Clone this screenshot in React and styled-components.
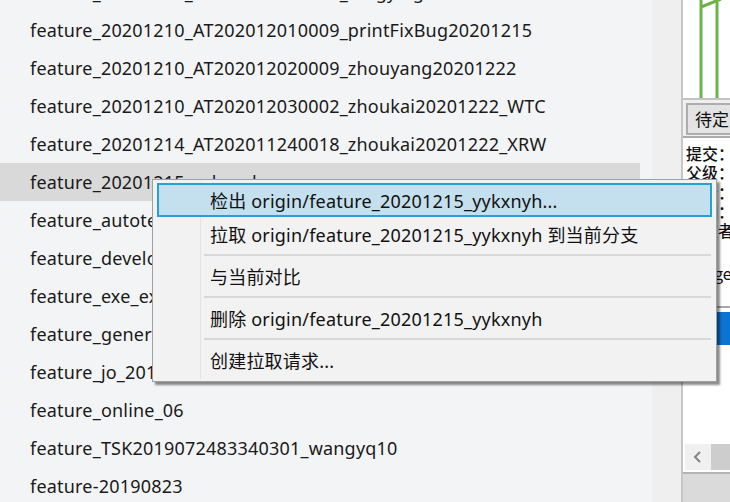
import React from 'react';
import styled, { createGlobalStyle } from 'styled-components';

const GlobalStyle = createGlobalStyle`
  html, body {
    margin: 0;
    padding: 0;
    width: 730px;
    height: 502px;
    overflow: hidden;
    font-family: "Noto Sans", "Noto Sans CJK SC", sans-serif;
  }
`;

const Window = styled.div`
  position: relative;
  display: flex;
  width: 730px;
  height: 502px;
  overflow: hidden;
  background: #f3f4f6;
`;

const BranchPane = styled.div`
  display: flex;
  width: 681px;
  flex-shrink: 0;
`;

const ListViewport = styled.div`
  width: 652px;
  height: 502px;
  overflow: hidden;
  background: #f3f4f6;
`;

const BranchList = styled.ul`
  list-style: none;
  margin: -27px 0 0;
  padding: 0;
  width: 640px;
`;

const BranchRow = styled.li`
  height: 38px;
  display: flex;
  align-items: center;
  padding-left: 30px;
  font-size: 18px;
  letter-spacing: 0.2px;
  color: #1a1a1a;
  white-space: nowrap;
  background: ${({ selected }) => (selected ? '#d9d9d9' : 'transparent')};
`;

const ScrollTrack = styled.div`
  flex: 1;
  background: #efefef;
`;

const DetailPane = styled.div`
  flex: 1;
  display: flex;
  flex-direction: column;
  border-left: 2px solid #c6c6c6;
  background: #ffffff;
  font-family: "Noto Sans CJK SC", sans-serif;
`;

const Graph = styled.div`
  height: 98px;
  background: #ffffff;
  border-bottom: 2px solid #c4c4c4;
`;

const ToolBar = styled.div`
  padding-top: 3px;
  padding-left: 3px;
  background: #f0f0f0;
  border-bottom: 2px solid #ababab;
  box-sizing: border-box;
  height: 38px;
`;

const ToolButton = styled.div`
  height: 32px;
  box-sizing: border-box;
  border: 2px solid #adadad;
  border-right: none;
  background: #e3e3e3;
  padding-left: 7px;
  font-size: 17px;
  line-height: 28px;
  white-space: nowrap;
  overflow: hidden;
  color: #111;
`;

const Details = styled.div`
  flex: 1;
  display: flex;
  flex-direction: column;
  padding-top: 6px;
  background: #fff;
`;

const InfoLine = styled.div`
  height: 19.3px;
  line-height: 19px;
  padding-left: 3px;
  font-size: 16px;
  font-weight: 500;
  color: #111;
  white-space: nowrap;
  overflow: hidden;
`;

const Message = styled(InfoLine)`
  margin-top: 24px;
  font-weight: 400;
`;

const Rule = styled.div`
  margin-top: 22px;
  height: 2px;
  background: #a9a9a9;
`;

const FileItem = styled.div`
  margin: 4px 0 0 3px;
  height: 33px;
  background: #0a74d2;
  border-radius: 3px 0 0 3px;
`;

const Spacer = styled.div`
  flex: 1;
`;

const HScroll = styled.div`
  display: flex;
  height: 26px;
  padding-left: 2px;
  margin-bottom: 2px;
`;

const ScrollButton = styled.div`
  width: 26px;
  background: #f0f0f0;
  display: flex;
  align-items: center;
  justify-content: center;
`;

const ScrollThumb = styled.div`
  flex: 1;
  background: #cdcdcd;
`;

const StatusArea = styled.div`
  height: 28px;
  border-top: 2px solid #b3b3b3;
  background: #dadada;
`;

const Menu = styled.div`
  position: absolute;
  left: 152px;
  top: 179px;
  width: 565px;
  box-sizing: border-box;
  padding: 3px 4px 4px 4px;
  background: #f2f2f2;
  border: 1px solid #a0a0a0;
  box-shadow: 3px 3px 2px rgba(0, 0, 0, 0.45);
  font-family: "Noto Sans", "Noto Sans CJK SC", sans-serif;
  font-size: 18px;
  letter-spacing: 0.2px;
  color: #111;

  &::before {
    content: '';
    position: absolute;
    left: 47px;
    top: 2px;
    bottom: 2px;
    width: 1px;
    background: #e3e3e3;
  }
`;

const MenuItem = styled.div`
  position: relative;
  height: 34px;
  box-sizing: border-box;
  display: flex;
  align-items: center;
  padding-left: 51px;
  white-space: nowrap;
  border: 2px solid ${({ active }) => (active ? '#27a0da' : 'transparent')};
  background: ${({ active }) => (active ? '#c4dfed' : 'transparent')};
  z-index: 1;
`;

const MenuSeparator = styled.div`
  height: 2px;
  margin: 3px 1px 3px 47px;
  background: #d8d8d8;
`;

const branches = [
  { name: 'feature_20201210_AT202012010008_fangying20201215' },
  { name: 'feature_20201210_AT202012010009_printFixBug20201215' },
  { name: 'feature_20201210_AT202012020009_zhouyang20201222' },
  { name: 'feature_20201210_AT202012030002_zhoukai20201222_WTC' },
  { name: 'feature_20201214_AT202011240018_zhoukai20201222_XRW' },
  { name: 'feature_20201215_yykxnyh', selected: true },
  { name: 'feature_autotest' },
  { name: 'feature_develop_20200601' },
  { name: 'feature_exe_export' },
  { name: 'feature_general_report' },
  { name: 'feature_jo_20190920' },
  { name: 'feature_online_06' },
  { name: 'feature_TSK2019072483340301_wangyq10' },
  { name: 'feature-20190823' },
];

const info = ['提交：', '父级：', '作者：', '日期：', '提交者：'];

export default function App() {
  return (
    <>
      <GlobalStyle />
      <Window>
        <BranchPane>
          <ListViewport>
            <BranchList>
              {branches.map((b) => (
                <BranchRow key={b.name} selected={b.selected}>
                  {b.name}
                </BranchRow>
              ))}
            </BranchList>
          </ListViewport>
          <ScrollTrack />
        </BranchPane>

        <DetailPane>
          <Graph>
            <svg width="47" height="98" viewBox="0 0 47 98">
              <g stroke="#6cb44a" strokeWidth="3" fill="none">
                <line x1="18" y1="0" x2="18" y2="98" />
                <line x1="34" y1="0" x2="34" y2="98" />
                <line x1="18" y1="7" x2="38" y2="-1" />
              </g>
            </svg>
          </Graph>
          <ToolBar>
            <ToolButton>待定</ToolButton>
          </ToolBar>
          <Details>
            {info.map((label) => (
              <InfoLine key={label}>{label}</InfoLine>
            ))}
            <Message>Merge branch</Message>
            <Rule />
            <FileItem />
            <Spacer />
            <HScroll>
              <ScrollButton>
                <svg width="10" height="14" viewBox="0 0 10 14">
                  <polyline points="7,2 2,7 7,12" stroke="#858585" strokeWidth="2" fill="none" />
                </svg>
              </ScrollButton>
              <ScrollThumb />
            </HScroll>
            <StatusArea />
          </Details>
        </DetailPane>

        <Menu>
          <MenuItem active>检出 origin/feature_20201215_yykxnyh...</MenuItem>
          <MenuItem>拉取 origin/feature_20201215_yykxnyh 到当前分支</MenuItem>
          <MenuSeparator />
          <MenuItem>与当前对比</MenuItem>
          <MenuSeparator />
          <MenuItem>删除 origin/feature_20201215_yykxnyh</MenuItem>
          <MenuSeparator />
          <MenuItem>创建拉取请求...</MenuItem>
        </Menu>
      </Window>
    </>
  );
}
